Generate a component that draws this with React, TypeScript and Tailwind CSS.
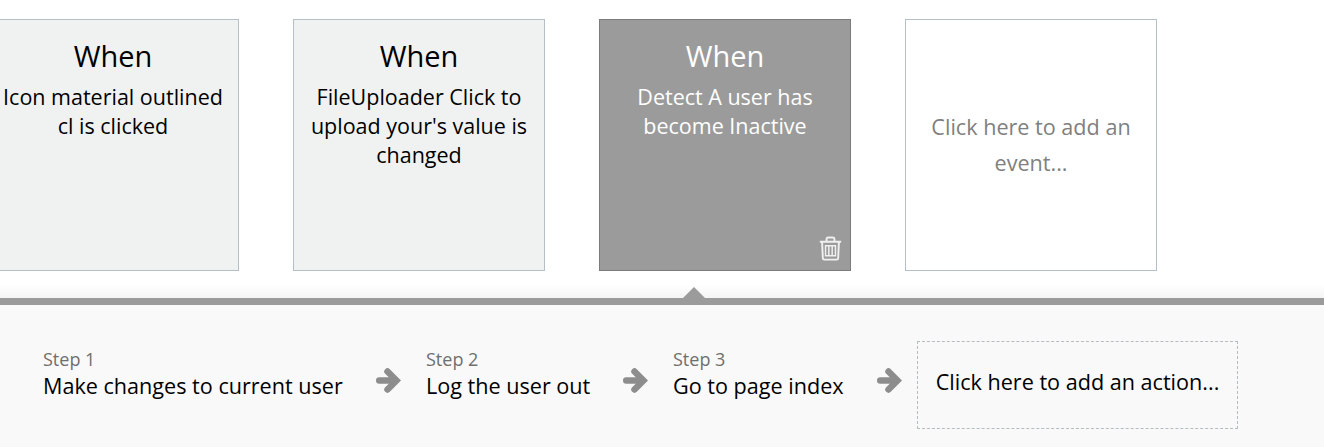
interface EventCardProps {
  title?: string;
  active?: boolean;
}

const EventCard = ({ title, active }: EventCardProps) => (
  <div
    className={`relative flex h-[252px] w-[252px] shrink-0 flex-col items-center border pt-[16px] text-center ${
      active ? 'border-[#7c7c7c] bg-[#9b9b9b] text-white' : 'border-[#b5c0c6] bg-[#f0f2f2] text-black'
    }`}
  >
    <div className="text-[29px] leading-[40px]">When</div>
    <div className="mt-[6px] px-[10px] text-[21.5px] leading-[29px]">{title}</div>
    {active && (
      <svg viewBox="0 0 24 24" className="absolute right-[6px] bottom-[8px] h-[27px] w-[27px] text-[#f0f0f0]" fill="none" stroke="currentColor" strokeWidth="1.7">
        <path d="M2.5 6h19M8.5 6V3.6c0-.9.6-1.4 1.4-1.4h4.2c.8 0 1.4.5 1.4 1.4V6M4.5 6l.7 14.6c0 .8.6 1.3 1.3 1.3h11c.7 0 1.3-.5 1.3-1.3L19.5 6" />
        <path d="M7.6 9.5h8.8v9H7.6zM10.5 9.5v9M13.5 9.5v9" strokeWidth="1.3" />
      </svg>
    )}
  </div>
);

const Arrow = () => (
  <svg viewBox="0 0 25 25" className="mt-[14px] h-[25px] w-[25px] shrink-0 text-[#8d8d8d]" fill="none" stroke="currentColor" strokeWidth="6.5">
    <path d="M3.25 12.5H19" strokeLinecap="round" />
    <path d="M11.5 3.5l9 9-9 9" strokeLinecap="round" strokeLinejoin="miter" />
  </svg>
);

const Step = ({ label, name, width }: { label: string; name: string; width: string }) => (
  <div className={`shrink-0 ${width}`}>
    <div className="text-[18px] leading-[24px] text-[#6f6f6f]">{label}</div>
    <div className="text-[21.6px] leading-[29px] whitespace-nowrap text-black">{name}</div>
  </div>
);

export default function App() {
  return (
    <div className="h-[447px] w-[1324px] overflow-hidden bg-white font-['Open_Sans',sans-serif]">
      <div className="-ml-[13px] flex gap-[54px] pt-[19px]">
        <EventCard title="Icon material outlined cl is clicked" />
        <EventCard title="FileUploader Click to upload your's value is changed" />
        <EventCard title="Detect A user has become Inactive" active />
        <div className="flex h-[252px] w-[252px] shrink-0 items-center justify-center border border-[#b5c0c6] bg-white px-5 text-center text-[21.6px] leading-[36px] text-[#808080]">
          Click here to add an event...
        </div>
      </div>

      <div className="relative mt-[14px] h-[13px] bg-gradient-to-b from-white to-[#f4f4f4]">
        <div className="absolute top-[2px] left-[683px] h-0 w-0 border-x-[11px] border-b-[11px] border-x-transparent border-b-[#9b9b9b]" />
      </div>
      <div className="h-[7px] bg-[#9b9b9b]" />

      <div className="flex h-[142px] items-start bg-[#f9f9f9] pt-[36px] pl-[43px]">
        <div className="flex items-center pt-[6px]">
          <Step label="Step 1" name="Make changes to current user" width="w-[333px]" />
          <Arrow />
          <div className="w-[25px]" />
          <Step label="Step 2" name="Log the user out" width="w-[197px]" />
          <Arrow />
          <div className="w-[25px]" />
          <Step label="Step 3" name="Go to page index" width="w-[204px]" />
          <Arrow />
        </div>
        <div className="ml-[15px] flex h-[88px] w-[321px] shrink-0 items-center justify-center border border-dashed border-[#b5bcc0] pb-[6px] text-[21.6px] text-black">
          Click here to add an action...
        </div>
      </div>
    </div>
  );
}
